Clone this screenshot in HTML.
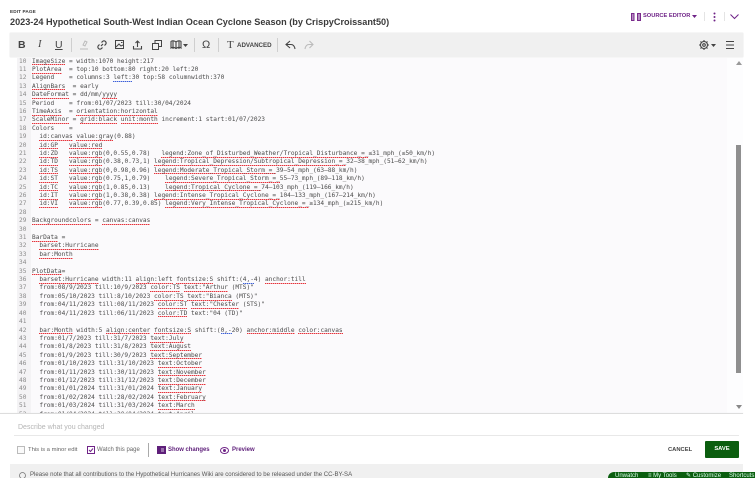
<!DOCTYPE html>
<html><head><meta charset="utf-8"><style>
html,body{margin:0;padding:0;background:#fff;width:755px;height:478px;overflow:hidden;font-family:"Liberation Sans",sans-serif}
body{filter:blur(.3px)}
.a{position:absolute}
#tb{left:10px;top:33px;width:733px;height:24px;background:#f0f0f0;border:0;box-shadow:0 0 1px #ccc}
.sep{position:absolute;width:1px;background:#cfcfcf;top:38px;height:14px}
#ed{left:17px;top:58px;width:710px;height:355px;background:#fbfafc;overflow:hidden}
#gut{left:17px;top:58px;width:14px;height:355px;background:#f4f3f5}
#num,#code{margin:0;font:6.15px/8.41px "DejaVu Sans Mono",monospace;white-space:pre;top:57.5px;color:#555}
#num{left:19px;color:#8a8a8a}
#code{left:32px;color:#4a4a4a}
u{text-decoration:none;padding-bottom:.7px;background:repeating-linear-gradient(90deg,#e5333b 0,#e5333b 1px,#f4a3a8 1px,#f4a3a8 2px) left bottom/100% 1px no-repeat}
u.b{background:repeating-linear-gradient(90deg,#3b5fd8 0,#3b5fd8 1px,#a9b8ee 1px,#a9b8ee 2px) left bottom/100% 1px no-repeat}
#clip{left:0;top:58px;width:755px;height:355px;overflow:hidden}
#clip pre{margin-top:-58px}
svg{position:absolute;overflow:visible;fill:none}
.pl{position:absolute;top:0;line-height:9px;font-size:6px;color:#dfe;white-space:nowrap}
</style></head><body>
<div class="a" style="left:10px;top:9px;font-size:4.700px;font-weight:bold;color:#3a3a3a;letter-spacing:.1px">EDIT PAGE</div>
<div class="a" style="left:10px;top:16.500px;font-size:9.150px;font-weight:bold;color:#3a3a3a;white-space:nowrap">2023-24 Hypothetical South-West Indian Ocean Cyclone Season (by CrispyCroissant50)</div>

<svg style="left:631px;top:13px" width="10" height="8"><path d="M.5.500h2.500v7h-2.500zM6.500.5h3v7h-3z" stroke="#7a2a8c" fill="#b48cc0"/></svg>
<div class="a" style="left:643px;top:13px;font-size:5.700px;font-weight:bold;color:#6f2387;white-space:nowrap">SOURCE EDITOR</div>
<svg style="left:692px;top:15px" width="5" height="3"><path d="M0 0h5L2.500 3z" fill="#6f2387"/></svg>
<div class="a" style="left:704px;top:12px;width:1px;height:9px;background:#e4e4e4"></div>
<svg style="left:713px;top:12px" width="3" height="10"><circle cx="1.500" cy="1.500" r="1" fill="#6f2387"/><circle cx="1.500" cy="5" r="1" fill="#6f2387"/><circle cx="1.500" cy="8.500" r="1" fill="#6f2387"/></svg>
<div class="a" style="left:724px;top:12px;width:1px;height:9px;background:#e4e4e4"></div>
<svg style="left:730px;top:14px" width="9" height="5"><path d="M.5.500L4.500 4.500 8.500.5" stroke="#6f2387"/></svg>

<div id="tb" class="a"></div>
<div class="a" style="left:18px;top:39px;font:bold 10.500px 'Liberation Sans',sans-serif;color:#444">B</div>
<div class="a" style="left:38px;top:39px;font:italic 10.500px 'Liberation Serif',serif;color:#444">I</div>
<div class="a" style="left:55px;top:39px;font:10.500px 'Liberation Sans',sans-serif;color:#444;text-decoration:underline">U</div>
<div class="sep" style="left:71px"></div>
<svg style="left:79px;top:40px" width="10" height="10" stroke="#bbb"><path d="M1 9h8M6 1L4 5l2 1 2-4z"/></svg>
<svg style="left:97px;top:40px" width="10" height="10" stroke="#444" stroke-width="1.200"><path d="M4 6L6 4M4.500 2.500l1-1a2 2 0 0 1 3 3l-1 1M5.500 7.500l-1 1a2 2 0 0 1-3-3l1-1"/></svg>
<svg style="left:115px;top:40px" width="10" height="10" stroke="#444"><path d="M.5.500h8v8h-8zM1 7l3-3 2 2 2-1M6 2.500h1.500"/></svg>
<svg style="left:133px;top:40px" width="10" height="10" stroke="#444" stroke-width="1.100"><path d="M.5 6v3h8V6M4.500 7V1M2.500 3l2-2 2 2"/></svg>
<svg style="left:152px;top:40px" width="10" height="10" stroke="#444"><path d="M.5 3.500h6v6h-6zM3 3.500v-3h6.500v6h-3"/></svg>
<svg style="left:170px;top:40px" width="12" height="10" stroke="#444" stroke-width="1.100"><path d="M6 2C4 .5 2 .5 1 1.500V8c1-.8 3-.8 5 .5 2-1.300 4-1.300 5-.5V1.500C10 .5 8 .5 6 2v6.500M3 1v8M9 1v8"/></svg>
<svg style="left:183px;top:44px" width="5" height="3"><path d="M0 0h5L2.500 3z" fill="#444"/></svg>
<div class="sep" style="left:194px"></div>
<div class="a" style="left:202px;top:39px;font-size:11px;color:#444">Ω</div>
<div class="sep" style="left:218px"></div>
<div class="a" style="left:227px;top:39px;font:11px 'Liberation Serif',serif;color:#444">T</div>
<div class="a" style="left:237px;top:42px;font-size:6.200px;font-weight:bold;color:#444;white-space:nowrap">ADVANCED</div>
<div class="sep" style="left:277px"></div>
<svg style="left:285px;top:40px" width="11" height="10" stroke="#444" stroke-width="1.100"><path d="M5 1L1 4.500 5 8M1 4.500h5c2 0 3.500 1.500 4 4.500"/></svg>
<svg style="left:304px;top:40px" width="10" height="10" stroke="#bbb" stroke-width="1.100"><path d="M5.500 1L9 4.500 5.500 8M9 4.500H5c-2 0-3.500 1.500-4 4.500"/></svg>
<svg style="left:699px;top:40px" width="10" height="10" stroke="#444" stroke-width="1.100"><circle cx="5" cy="5" r="3.500"/><circle cx="5" cy="5" r="1.300"/><path d="M5 0v1.500M5 8.500V10M0 5h1.500M8.500 5H10M1.500 1.500l1 1M7.500 7.500l1 1M1.500 8.500l1-1M7.500 2.500l1-1"/></svg>
<svg style="left:711px;top:44px" width="5" height="3"><path d="M0 0h5L2.500 3z" fill="#444"/></svg>
<svg style="left:726px;top:41px" width="8" height="8" stroke="#444"><path d="M0 .5h8M0 4h8M0 7.500h8"/></svg>

<div id="ed" class="a"></div>
<div id="gut" class="a"></div>
<div id="clip" class="a">
<pre id="num" class="a">10
11
12
13
14
15
16
17
18
19
20
21
22
23
24
25
26
27
28
29
30
31
32
33
34
35
36
37
38
39
40
41
42
43
44
45
46
47
48
49
50
51
52</pre>
<pre id="code" class="a"><u>ImageSize</u> = width:1070 height:217
<u>PlotArea</u>  = top:10 bottom:80 right:20 left:20
Legend    = columns:3 <u class="b">left:</u>30 top:58 columnwidth:370
<u>AlignBars</u>  = early
<u>DateFormat</u> = dd/mm/<u>yyyy</u>
Period    = from:01/07/2023 till:30/04/2024
<u>TimeAxis</u>  = <u>orientation:horizontal</u>
<u>ScaleMinor</u> = <u>grid:black</u> <u>unit:month</u> increment:1 start:01/07/2023
Colors    =
  <u>id:canvas</u> <u>value:gray</u>(0.88)
  <u>id:GP</u>   <u>value:red</u>
  <u>id:ZD</u>   <u>value:rgb</u>(0,0.55,0.78)   <u>legend:Zone_of_Disturbed_Weather/Tropical_Disturbance_=_</u>≤31_mph_(≤50_km/h)
  <u>id:TD</u>   <u>value:rgb</u>(0.38,0.73,1) <u>legend:Tropical_Depression/Subtropical_Depression_=_</u>32–38_mph_(51–62_km/h)
  <u>id:TS</u>   <u>value:rgb</u>(0,0.98,0.96) <u>legend:Moderate_Tropical_Storm_=_</u>39–54_mph_(63–88_km/h)
  <u>id:ST</u>   <u>value:rgb</u>(0.75,1,0.79)    <u>legend:Severe_Tropical_Storm_=_</u>55–73_mph_(89–118_km/h)
  <u>id:TC</u>   <u>value:rgb</u>(1,0.85,0.13)    <u>legend:Tropical_Cyclone_=_</u>74–103_mph_(119–166_km/h)
  <u>id:IT</u>   <u>value:rgb</u>(1,0.38,0.38) <u>legend:Intense_Tropical_Cyclone_=_</u>104–133_mph_(167–214_km/h)
  <u>id:VI</u>   <u>value:rgb</u>(0.77,0.39,0.85) <u>legend:Very_Intense_Tropical_Cyclone_=_</u>≥134_mph_(≥215_km/h)

<u>Backgroundcolors</u> = <u>canvas:canvas</u>

<u>BarData</u> =
  <u>barset:Hurricane</u>
  <u>bar:Month</u>

<u>PlotData</u>=
  <u>barset:Hurricane</u> width:11 <u>align:left</u> <u>fontsize:S</u> shift:(<u class="b">4,-</u>4) <u>anchor:till</u>
  from:08/9/2023 till:10/9/2023 <u>color:TS</u> <u>text:"Arthur</u> (MTS)"
  from:05/10/2023 till:8/10/2023 <u>color:TS</u> <u>text:"Bianca</u> (MTS)"
  from:04/11/2023 till:08/11/2023 <u>color:ST</u> <u>text:"Chester</u> (STS)"
  from:04/11/2023 till:06/11/2023 <u>color:TD</u> text:"04 (TD)"

  <u>bar:Month</u> width:5 <u>align:center</u> <u>fontsize:S</u> shift:(<u class="b">0,-</u>20) <u>anchor:middle</u> <u>color:canvas</u>
  from:01/7/2023 till:31/7/2023 <u>text:July</u>
  from:01/8/2023 till:31/8/2023 <u>text:August</u>
  from:01/9/2023 till:30/9/2023 <u>text:September</u>
  from:01/10/2023 till:31/10/2023 <u>text:October</u>
  from:01/11/2023 till:30/11/2023 <u>text:November</u>
  from:01/12/2023 till:31/12/2023 <u>text:December</u>
  from:01/01/2024 till:31/01/2024 <u>text:January</u>
  from:01/02/2024 till:28/02/2024 <u>text:February</u>
  from:01/03/2024 till:31/03/2024 <u>text:March</u>
  from:01/04/2024 till:30/04/2024 <u>text:April</u></pre>
</div>
<div class="a" style="left:727px;top:58px;width:16px;height:355px;background:#fdfdfe"></div>
<div class="a" style="left:736px;top:145px;width:5px;height:228px;background:#8f8f8f"></div>
<svg style="left:736px;top:61px" width="6" height="4"><path d="M0 4h6L3 0z" fill="#999"/></svg>
<svg style="left:736px;top:405px" width="6" height="4"><path d="M0 0h6L3 4z" fill="#888"/></svg>
<div class="a" style="left:0;top:413px;width:743px;height:1px;background:#ddd;box-shadow:0 1px 2px #ddd"></div>
<div class="a" style="left:0;top:414px;width:755px;height:50px;background:#fff"></div>

<div class="a" style="left:18px;top:424px;font-size:7px;color:#b5b5b5;white-space:nowrap">Describe what you changed</div>
<div class="a" style="left:14px;top:435px;width:725px;height:1px;background:#e8e8e8"></div>
<div class="a" style="left:17px;top:446px;width:6px;height:6px;border:1px solid #bbb;background:#fafafa"></div>
<div class="a" style="left:28px;top:447px;font-size:5.900px;color:#666;white-space:nowrap">This is a minor edit</div>
<svg style="left:87px;top:446px" width="8" height="8"><path d="M.5.500h7v7h-7z" stroke="#6f2387"/><path d="M2 4l1.500 1.500L6 2.500" stroke="#6f2387"/></svg>
<div class="a" style="left:97px;top:447px;font-size:6px;color:#666;white-space:nowrap">Watch this page</div>
<div class="a" style="left:148px;top:443px;width:1px;height:14px;background:#aaa"></div>
<svg style="left:157px;top:446px" width="9" height="8"><path d="M0 0h9v8H0z" fill="#5e1f7a"/><path d="M4 3h3M4 5h3" stroke="#fff" stroke-width=".8"/></svg>
<div class="a" style="left:168px;top:446.500px;font-size:5.950px;font-weight:bold;color:#5e1f7a;white-space:nowrap">Show changes</div>
<svg style="left:220px;top:447px" width="9" height="7" stroke="#6f2387"><ellipse cx="4.500" cy="3.500" rx="4" ry="3"/><circle cx="4.500" cy="3.500" r="1" fill="#6f2387"/></svg>
<div class="a" style="left:232px;top:446.500px;font-size:6px;font-weight:bold;color:#5e1f7a;white-space:nowrap">Preview</div>
<div class="a" style="left:668px;top:447px;font-size:5.800px;font-weight:bold;color:#444;white-space:nowrap">CANCEL</div>
<div class="a" style="left:705px;top:441px;width:34px;height:17px;background:#0b5e0f;border-radius:1px;color:#fff;font-size:5.800px;font-weight:bold;text-align:center;line-height:17px">SAVE</div>

<div class="a" style="left:10px;top:464px;width:733px;height:14px;background:#f0f0f0"></div>
<svg style="left:19px;top:471.500px" width="7" height="7" stroke="#777" stroke-width=".8"><circle cx="3.500" cy="3.500" r="3"/></svg>
<div class="a" style="left:30px;top:471.500px;font-size:6.050px;color:#555;white-space:nowrap">Please note that all contributions to the Hypothetical Hurricanes Wiki are considered to be released under the CC-BY-SA</div>
<div class="a" style="left:608px;top:472px;width:147px;height:6px;background:#0b5e0f;border-radius:6px 0 0 0;overflow:hidden">
<span class="pl" style="left:7px">Unwatch</span><span class="pl" style="left:40px">≡ My Tools</span><span class="pl" style="left:78px">✎ Customize</span><span class="pl" style="left:121px">Shortcuts</span>
</div>
</body></html>
